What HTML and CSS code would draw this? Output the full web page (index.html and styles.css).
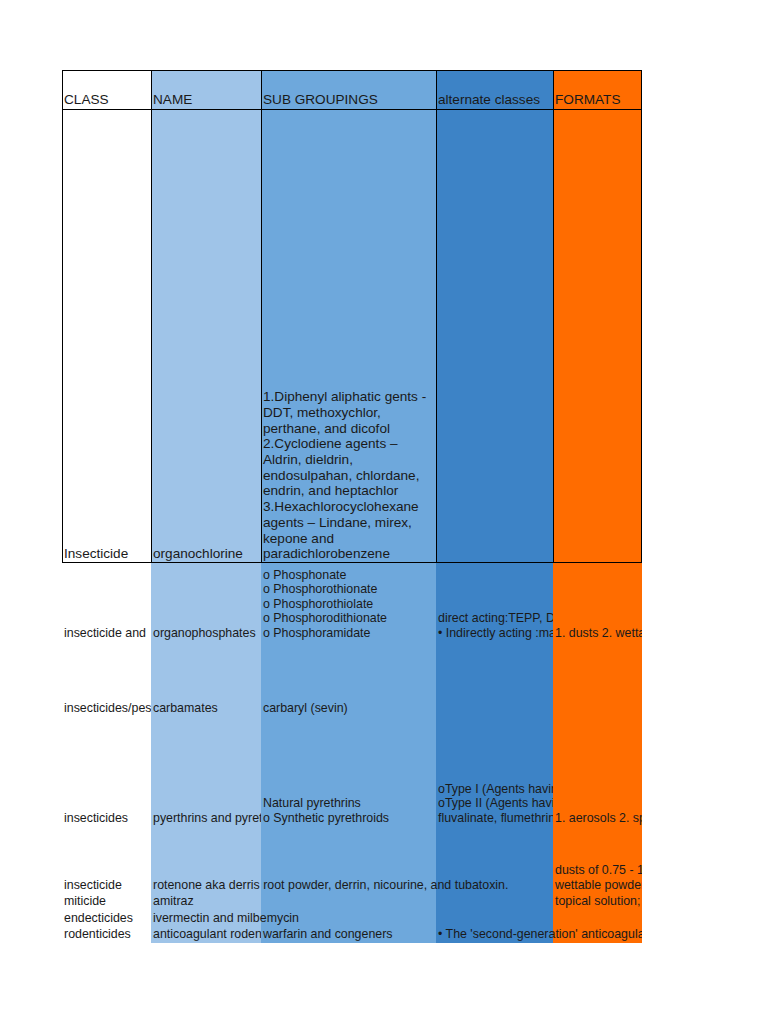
FILE: index.html
```html
<!DOCTYPE html>
<html lang="en">
<head>
<meta charset="utf-8">
<title>Pesticide classes</title>
<link rel="stylesheet" href="styles.css">
</head>
<body>
<div class="sheet">
  <table class="grid">
    <colgroup>
      <col class="col-class">
      <col class="col-name">
      <col class="col-sub">
      <col class="col-alt">
      <col class="col-fmt">
    </colgroup>
    <thead>
      <tr class="head boxed">
        <th><div class="cell">CLASS</div></th>
        <th><div class="cell">NAME</div></th>
        <th><div class="cell">SUB GROUPINGS</div></th>
        <th><div class="cell">alternate classes</div></th>
        <th><div class="cell">FORMATS</div></th>
      </tr>
    </thead>
    <tbody>
      <tr class="r1 boxed">
        <td><div class="cell">Insecticide</div></td>
        <td><div class="cell">organochlorine</div></td>
        <td><div class="cell tall">1.Diphenyl aliphatic gents -<br>DDT, methoxychlor,<br>perthane, and dicofol<br>2.Cyclodiene agents –<br>Aldrin, dieldrin,<br>endosulpahan, chlordane,<br>endrin, and heptachlor<br>3.Hexachlorocyclohexane<br>agents – Lindane, mirex,<br>kepone and<br>paradichlorobenzene</div></td>
        <td><div class="cell"></div></td>
        <td><div class="cell"></div></td>
      </tr>
      <tr class="r2">
        <td><div class="cell clip">insecticide and</div></td>
        <td><div class="cell clip">organophosphates</div></td>
        <td><div class="cell clip">o Phosphonate<br>o Phosphorothionate<br>o Phosphorothiolate<br>o Phosphorodithionate<br>o Phosphoramidate</div></td>
        <td><div class="cell clip">direct acting:TEPP, DDVP, dicrotophos<br>• Indirectly acting :malathion, parathion</div></td>
        <td><div class="cell clip">1. dusts 2. wettable powders</div></td>
      </tr>
      <tr class="r3">
        <td><div class="cell clip">insecticides/pesticides</div></td>
        <td><div class="cell">carbamates</div></td>
        <td><div class="cell">carbaryl (sevin)</div></td>
        <td><div class="cell"></div></td>
        <td><div class="cell"></div></td>
      </tr>
      <tr class="r4">
        <td><div class="cell clip">insecticides</div></td>
        <td><div class="cell clip">pyerthrins and pyrethroids</div></td>
        <td><div class="cell clip">Natural pyrethrins<br>o Synthetic pyrethroids</div></td>
        <td><div class="cell clip">oType I (Agents having no cyano group)<br>oType II (Agents having a cyano group)<br>fluvalinate, flumethrin, cypermethrin</div></td>
        <td><div class="cell clip">1. aerosols 2. sprays</div></td>
      </tr>
      <tr class="r5">
        <td><div class="cell clip">insecticide</div></td>
        <td><div class="cell">rotenone aka derris root powder, derrin, nicourine, and tubatoxin.</div></td>
        <td><div class="cell"></div></td>
        <td><div class="cell"></div></td>
        <td><div class="cell clip">dusts of 0.75 - 1% rotenone<br>wettable powder</div></td>
      </tr>
      <tr class="r6">
        <td><div class="cell clip">miticide</div></td>
        <td><div class="cell">amitraz</div></td>
        <td><div class="cell"></div></td>
        <td><div class="cell"></div></td>
        <td><div class="cell clip">topical solution; collar</div></td>
      </tr>
      <tr class="r7">
        <td><div class="cell clip">endecticides</div></td>
        <td><div class="cell">ivermectin and milbemycin</div></td>
        <td><div class="cell"></div></td>
        <td><div class="cell"></div></td>
        <td><div class="cell"></div></td>
      </tr>
      <tr class="r8">
        <td><div class="cell clip">rodenticides</div></td>
        <td><div class="cell clip">anticoagulant rodenticides</div></td>
        <td><div class="cell">warfarin and congeners</div></td>
        <td><div class="cell">• The 'second-generation' anticoagulants</div></td>
        <td><div class="cell"></div></td>
      </tr>
    </tbody>
  </table>
</div>
</body>
</html>
```

FILE: styles.css
```css
html, body {
  margin: 0;
  background: #ffffff;
}

body {
  font-family: "Liberation Sans", Arial, sans-serif;
  color: #1a1a1a;
}

.sheet {
  margin: 70px 0 0 62px;
  width: 580px;
  overflow: hidden;
}

.grid {
  border-collapse: separate;
  border-spacing: 0;
  table-layout: fixed;
  width: 580px;
}

.col-class { width: 89px; }
.col-name  { width: 110px; background: #9fc4e8; }
.col-sub   { width: 175px; background: #6ea8dc; }
.col-alt   { width: 117px; background: #3d83c6; }
.col-fmt   { width: 89px;  background: #ff6c00; }

th, td {
  padding: 0;
  vertical-align: bottom;
  text-align: left;
  font-weight: normal;
}

.cell {
  box-sizing: border-box;
  display: flex;
  flex-direction: column;
  justify-content: flex-end;
  padding: 0 2px 2px 2px;
  white-space: nowrap;
  font-size: 12.4px;
  line-height: 14.5px;
}

.clip {
  overflow: hidden;
}

.boxed > th,
.boxed > td {
  border-left: 1px solid #000;
  border-bottom: 1px solid #000;
}

.boxed > :last-child {
  border-right: 1px solid #000;
}

.head > th {
  border-top: 1px solid #000;
}

.boxed .cell {
  padding-left: 1px;
}

.head .cell {
  height: 38px;
  font-size: 13.6px;
  line-height: 15.7px;
  padding-bottom: 1px;
}

.r1 .cell {
  height: 452px;
  font-size: 13.6px;
  line-height: 15.7px;
  padding-bottom: 0;
}

.r1 .tall {
  line-height: 15.7px;
}

.r2 .cell { height: 79px; }
.r3 .cell { height: 75px; }
.r4 .cell { height: 110px; }
.r5 .cell { height: 67px; }
.r6 .cell { height: 16px; }
.r7 .cell { height: 17px; }
.r8 .cell { height: 16px; }
```
